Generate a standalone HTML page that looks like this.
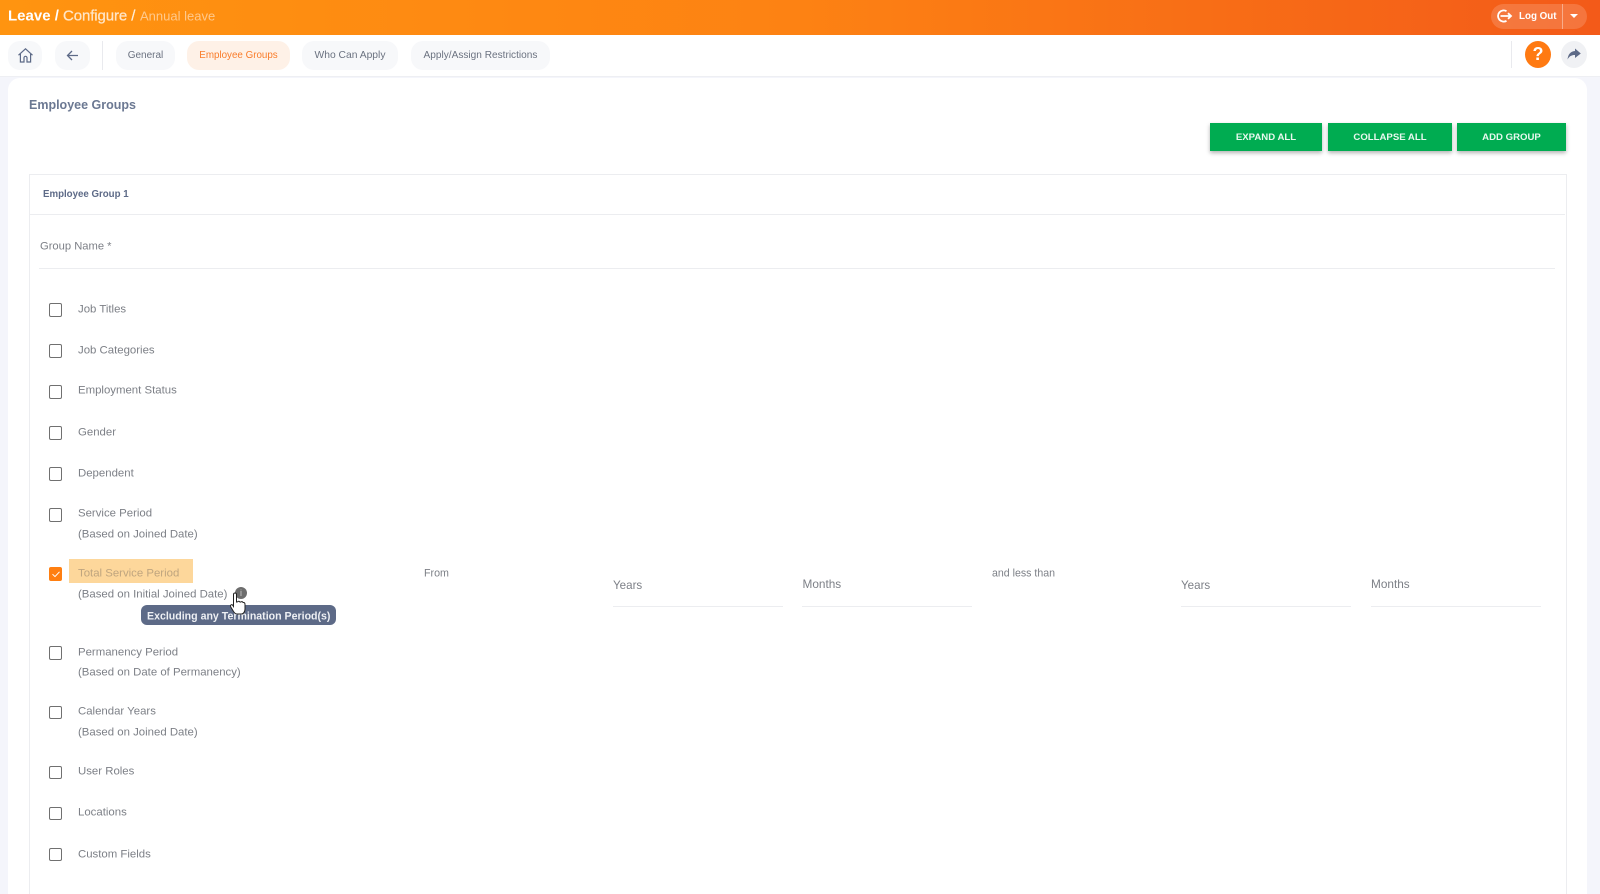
<!DOCTYPE html>
<html><head><meta charset="utf-8"><title>Employee Groups</title>
<style>
*{box-sizing:border-box}
html,body{margin:0;padding:0;width:1600px;height:894px;overflow:hidden;background:#f4f5fb;font-family:"Liberation Sans",sans-serif}
#p{position:relative;width:1600px;height:894px;overflow:hidden;background:#f4f5fb;filter:blur(.3px)}
.a{position:absolute}
.t{position:absolute;white-space:nowrap;transform:translateY(-50%);line-height:1}
.l{font-size:11.4px;color:#7d8087;left:78px;margin-top:1px}
.cb{position:absolute;left:48.5px;width:13.5px;height:13.5px;border:1.3px solid #707070;border-radius:2px;background:#fff}
.pill{position:absolute;top:41px;height:29px;border-radius:12px;background:#f7f8fa;color:#6b7280;font-size:10px;line-height:30px;text-align:center}
.btn{position:absolute;top:123px;height:28px;background:#00ac51;color:#e8f8ef;font-size:9.6px;font-weight:bold;line-height:29px;text-align:center;box-shadow:0 2px 4px rgba(0,0,0,.3)}
.u{position:absolute;height:1px;background:#eceDf0}
</style></head><body><div id="p">
<div class="a" style="left:0;top:0;width:1600px;height:35px;background:linear-gradient(90deg,#ff9410 0%,#fd8213 50%,#f35a19 100%)"></div>
<div class="t" style="left:8px;top:15.5px;font-size:15px;font-weight:bold;color:#fff">Leave /</div>
<div class="t" style="left:63px;top:15.5px;font-size:15px;color:#ffe6c8;-webkit-text-stroke:.25px #ffe6c8;letter-spacing:-.1px">Configure <span style="color:#fff0dd">/</span></div>
<div class="t" style="left:140px;top:15.5px;font-size:13px;color:#ffc98c">Annual leave</div>
<div class="a" style="left:1491px;top:4px;width:96px;height:25px;border-radius:13px;background:rgba(255,255,255,.16)"></div>
<div class="a" style="left:1562px;top:4px;width:1px;height:25px;background:rgba(255,255,255,.4)"></div>
<svg class="a" style="left:1495px;top:7px" width="18" height="18" viewBox="0 0 18 18" fill="none" stroke="#fff" stroke-width="1.8"><path d="M11.5 4.2A5.6 5.6 0 1 0 11.5 13.800"/><path d="M5.500 9H15.500M13 6.200l3 2.800-3 2.800"/></svg>
<div class="t" style="left:1519px;top:17px;font-size:9.800px;font-weight:bold;color:#fff">Log Out</div>
<div class="a" style="left:1570px;top:14px;width:0;height:0;border-left:4px solid transparent;border-right:4px solid transparent;border-top:4px solid #fff"></div>
<div class="a" style="left:0;top:35px;width:1600px;height:42px;background:#fff;border-bottom:1px solid #eeeff3"></div>
<div class="a" style="left:8px;top:41px;width:34px;height:29px;border-radius:12px;background:#f7f8fa"></div>
<svg class="a" style="left:17px;top:47px" width="17" height="17" viewBox="0 0 17 17" fill="none" stroke="#5d6a87" stroke-width="1.2"><path d="M1.500 8.200 8.500 1.800l7 6.400M3.400 7v8h3.600v-4.200a1.500 1.500 0 0 1 3 0V15h3.600V7"/></svg>
<div class="a" style="left:55px;top:41px;width:35px;height:29px;border-radius:12px;background:#f7f8fa"></div>
<svg class="a" style="left:66px;top:49px" width="13" height="13" viewBox="0 0 13 13" fill="none" stroke="#5d6a87" stroke-width="1.3"><path d="M12 6.500H1.500M6 2 1.500 6.500 6 11"/></svg>
<div class="a" style="left:102px;top:41px;width:1px;height:29px;background:#e9eaee"></div>
<div class="pill" style="left:116px;width:59px">General</div>
<div class="pill" style="left:187px;width:103px;background:#fef1e7;color:#f97c2a;font-size:9.8px">Employee Groups</div>
<div class="pill" style="left:302px;width:96px;font-size:10.3px">Who Can Apply</div>
<div class="pill" style="left:411px;width:139px;font-size:10.1px">Apply/Assign Restrictions</div>
<div class="a" style="left:1511px;top:41px;width:1px;height:27px;background:#e9eaee"></div>
<div class="a" style="left:1525px;top:41px;width:26px;height:27px;border-radius:50%;background:#ff7a12;color:#fff;font-weight:bold;font-size:18px;line-height:27px;text-align:center">?</div>
<div class="a" style="left:1561px;top:41px;width:26px;height:27px;border-radius:50%;background:#f0f1f4"></div>
<svg class="a" style="left:1567px;top:48px" width="14" height="13" viewBox="0 0 14 13" fill="#5d6a87"><path d="M8 0.500 13.800 5.500 8 10V7C4.500 7 2.200 8.300 0.500 11.500 1 6.500 3.500 3.200 8 3Z"/></svg>
<div class="a" style="left:8px;top:78px;width:1579px;height:830px;background:#fff;border-radius:12px"></div>
<div class="t" style="left:29px;top:104.500px;font-size:12.500px;font-weight:bold;color:#6b7892">Employee Groups</div>
<div class="btn" style="left:1210px;width:112px">EXPAND ALL</div>
<div class="btn" style="left:1328px;width:124px">COLLAPSE ALL</div>
<div class="btn" style="left:1457px;width:109px">ADD GROUP</div>
<div class="a" style="left:28.500px;top:174px;width:1538px;height:740px;border:1.500px solid #ecedf0"></div>
<div class="u" style="left:30px;top:214px;width:1535px"></div>
<div class="t" style="left:43px;top:194.500px;font-size:9.700px;font-weight:bold;color:#5d6a87">Employee Group 1</div>
<div class="t" style="left:40px;top:246.500px;font-size:11.200px;color:#7d8087">Group Name&nbsp;*</div>
<div class="u" style="left:39px;top:268px;width:1516px"></div>
<div class="cb" style="top:303px"></div><div class="t l" style="top:309px">Job Titles</div>
<div class="cb" style="top:344px"></div><div class="t l" style="top:350px">Job Categories</div>
<div class="cb" style="top:385px"></div><div class="t l" style="top:390px">Employment Status</div>
<div class="cb" style="top:426px"></div><div class="t l" style="top:431.500px">Gender</div>
<div class="cb" style="top:467px"></div><div class="t l" style="top:473px">Dependent</div>
<div class="cb" style="top:508px"></div><div class="t l" style="top:513px">Service Period</div><div class="t l" style="top:534px">(Based on Joined Date)</div>
<div class="a" style="left:69px;top:559px;width:124px;height:24px;background:#fdd79b"></div>
<div class="a" style="left:48.500px;top:567px;width:13.500px;height:13.500px;border-radius:2px;background:#ff7f11"></div>
<svg class="a" style="left:48.500px;top:567px" width="14" height="14" viewBox="0 0 14 14" fill="none" stroke="#fff" stroke-width="1"><path d="M3.500 7.200 6 9.600 10.500 4.800"/></svg>
<div class="t l" style="top:573px;color:#bfa57f">Total Service Period</div>
<div class="t l" style="top:594px">(Based on Initial Joined Date)</div>
<div class="a" style="left:235px;top:587px;width:12px;height:12px;border-radius:50%;background:#6d6d6d;color:#ccc;font-size:9px;line-height:12px;text-align:center">i</div>
<div class="a" style="left:141px;top:605px;width:195px;height:20px;border-radius:6px;background:#5d6a87"></div>
<div class="t" style="left:147px;top:617px;font-size:10.600px;font-weight:bold;color:#eef0f4">Excluding any Termination Period(s)</div>
<svg class="a" style="left:229px;top:592px" width="18" height="24" viewBox="0 0 18 24" fill="#fff" stroke="#222" stroke-width="1"><path d="M4.500 2.500a1.500 1.500 0 0 1 3 0V10l1.200-.2a1.300 1.300 0 0 1 2.300.3l.8-.1a1.300 1.300 0 0 1 2.200.5l.5 0c1.200 0 1.500.9 1.500 2V17c0 2.500-1.500 5-3.500 5H8C6.500 22 5.500 21 4.500 19.500L1.500 14.500C1 13.500 2.500 12 3.500 13L4.500 14.500Z"/></svg>
<div class="t" style="left:424px;top:573.500px;font-size:10.700px;color:#7d8087">From</div>
<div class="t" style="left:613px;top:586px;font-size:11.600px;color:#7d8087">Years</div>
<div class="u" style="left:613px;top:606px;width:170px"></div>
<div class="t" style="left:802.500px;top:585px;font-size:11.800px;color:#7d8087">Months</div>
<div class="u" style="left:802px;top:606px;width:170px"></div>
<div class="t" style="left:992px;top:573.500px;font-size:10.600px;color:#7d8087">and less than</div>
<div class="t" style="left:1181px;top:586px;font-size:11.600px;color:#7d8087">Years</div>
<div class="u" style="left:1181px;top:606px;width:170px"></div>
<div class="t" style="left:1371px;top:585px;font-size:11.800px;color:#7d8087">Months</div>
<div class="u" style="left:1371px;top:606px;width:170px"></div>
<div class="cb" style="top:646px"></div><div class="t l" style="top:652px">Permanency Period</div><div class="t l" style="top:671.500px">(Based on Date of Permanency)</div>
<div class="cb" style="top:705.500px"></div><div class="t l" style="top:711px">Calendar Years</div><div class="t l" style="top:732px">(Based on Joined Date)</div>
<div class="cb" style="top:765.500px"></div><div class="t l" style="top:771px">User Roles</div>
<div class="cb" style="top:806.500px"></div><div class="t l" style="top:812px">Locations</div>
<div class="cb" style="top:847.500px"></div><div class="t l" style="top:853.500px">Custom Fields</div>
</div></body></html>
